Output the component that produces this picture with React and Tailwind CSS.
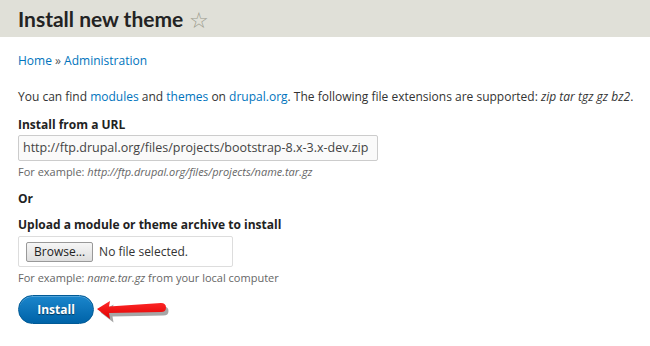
const font = "font-['Open_Sans','Liberation_Sans',sans-serif]";

function Arrow() {
  return (
    <svg width="74" height="26" viewBox="0 0 74 26" className="ml-[2px] mt-[1px]">
      <defs>
        <linearGradient id="ar" x1="0" y1="0" x2="0" y2="1">
          <stop offset="0" stopColor="#ff2a2a" />
          <stop offset="1" stopColor="#e00000" />
        </linearGradient>
      </defs>
      <path
        d="M3 14 L16 6 L15 11 L66 8 Q71 8 71 12.5 Q71 17 66 17 L15 18 L16 24 Z"
        fill="#000"
        opacity="0.35"
        transform="translate(1.5 1.5)"
      />
      <path
        d="M1 12 L14 4 L13 9.5 L65 6 Q70 6 70 10.5 Q70 15 65 15 L13 16 L14 22 Z"
        fill="url(#ar)"
        strokeLinejoin="round"
      />
    </svg>
  );
}

export default function App() {
  return (
    <div className={`w-[650px] h-[346px] bg-white text-[#333] ${font}`}>
      {/* Header */}
      <div className="h-[37px] bg-[#e0e0d8] flex items-center pl-[18px] pt-[1px]">
        <h1 className="text-[21px] font-bold text-[#232323] font-['Lato','Open_Sans',sans-serif]">
          Install new theme
        </h1>
        <span className="ml-[6px] text-[22px] leading-none text-[#9a9a8c]">☆</span>
      </div>

      <div className="px-[18px]">
        {/* Breadcrumb */}
        <div className="mt-[15px] text-[12px] leading-[18px]">
          <a className="text-[#0074bd]">Home</a>
          <span className="text-[#555]"> » </span>
          <a className="text-[#0074bd]">Administration</a>
        </div>

        <p className="mt-[18px] text-[12px] leading-[18px] whitespace-nowrap">
          You can find <a className="text-[#0074bd]">modules</a> and{" "}
          <a className="text-[#0074bd]">themes</a> on{" "}
          <a className="text-[#0074bd]">drupal.org</a>. The following file extensions are supported:{" "}
          <em>zip tar tgz gz bz2</em>.
        </p>

        {/* URL */}
        <div className="mt-[10px] text-[12px] font-bold leading-[18px] text-[#222]">Install from a URL</div>
        <div className="mt-[1px] w-[360px] h-[26px] border border-[#ccc] rounded-[2px] bg-[#fafafa] flex items-center px-[4px] text-[12.5px] text-[#444] whitespace-nowrap overflow-hidden">
          http://ftp.drupal.org/files/projects/bootstrap-8.x-3.x-dev.zip
        </div>
        <div className="mt-[3px] text-[11px] leading-[16px] text-[#666]">
          For example: <em>http://ftp.drupal.org/files/projects/name.tar.gz</em>
        </div>

        <div className="mt-[10px] text-[12px] font-bold leading-[18px] text-[#222]">Or</div>

        {/* Upload */}
        <div className="mt-[8px] text-[12px] font-bold leading-[18px] text-[#222]">
          Upload a module or theme archive to install
        </div>
        <div className="mt-[2px] w-[215px] h-[31px] border border-[#ddd] rounded-[2px] flex items-center pl-[7px] text-[12px]">
          <button className="h-[20px] px-[7px] border border-[#999] rounded-[2px] bg-gradient-to-b from-[#f6f6f6] to-[#dedede] text-[12px] text-[#222] leading-none">
            Browse...
          </button>
          <span className="ml-[6px] text-[#333]">No file selected.</span>
        </div>
        <div className="mt-[3px] text-[11px] leading-[16px] text-[#666]">
          For example: <em>name.tar.gz</em> from your local computer
        </div>

        {/* Install */}
        <div className="mt-[9px] flex items-center">
          <button className="w-[76px] h-[29px] rounded-full bg-gradient-to-b from-[#1a86cc] to-[#0063a8] border border-[#005a96] text-white text-[12px] font-bold shadow-[inset_0_1px_0_rgba(255,255,255,0.25)] [text-shadow:0_1px_1px_rgba(0,0,0,0.5)]">
            Install
          </button>
          <Arrow />
        </div>
      </div>
    </div>
  );
}
